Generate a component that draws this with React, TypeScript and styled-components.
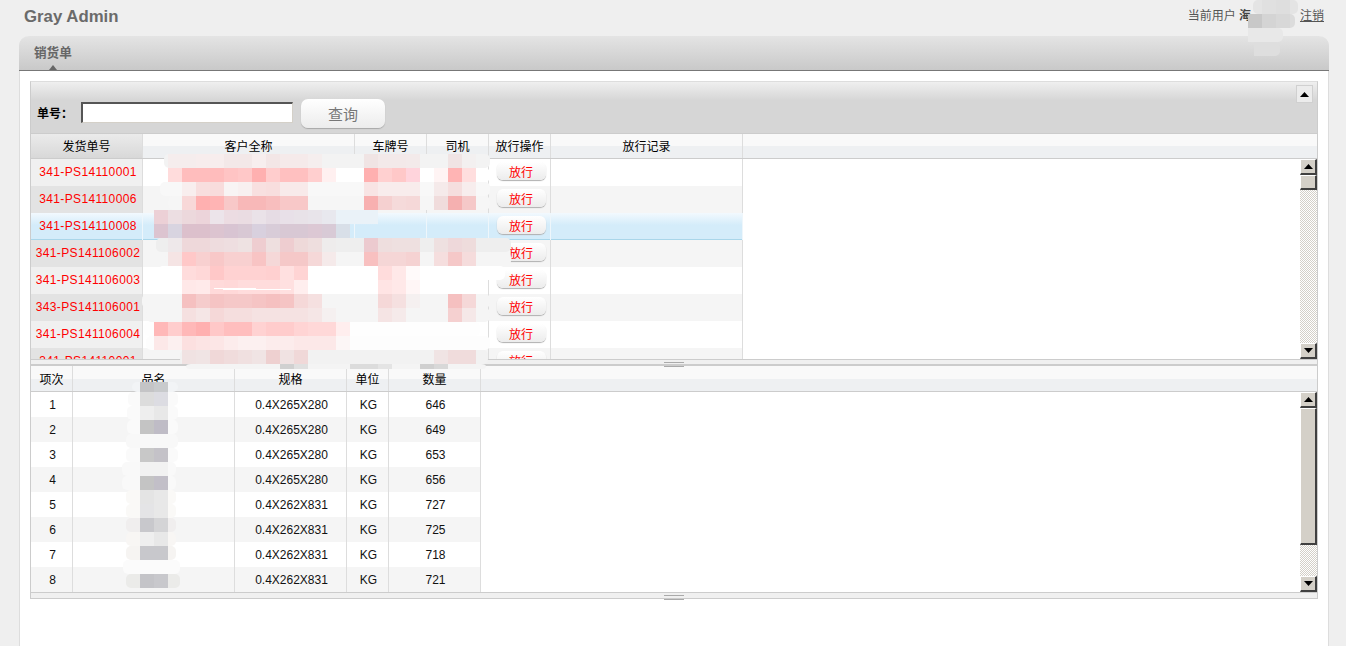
import React from 'react';
import styled, { createGlobalStyle } from 'styled-components';

const GlobalStyle = createGlobalStyle`
  html, body {
    margin: 0;
    padding: 0;
    height: 100%;
    overflow: hidden;
    background: #efefef;
    font-family: "Liberation Sans", "Noto Sans CJK SC", sans-serif;
    font-size: 12px;
    color: #111;
  }
  * { box-sizing: border-box; }
`;

const orders = [
  '341-PS14110001',
  '341-PS14110006',
  '341-PS14110008',
  '341-PS141106002',
  '341-PS141106003',
  '343-PS141106001',
  '341-PS141106004',
  '341-PS14110001',
];

const items = [
  ['1', '0.4X265X280', 'KG', '646'],
  ['2', '0.4X265X280', 'KG', '649'],
  ['3', '0.4X265X280', 'KG', '653'],
  ['4', '0.4X265X280', 'KG', '656'],
  ['5', '0.4X262X831', 'KG', '727'],
  ['6', '0.4X262X831', 'KG', '725'],
  ['7', '0.4X262X831', 'KG', '718'],
  ['8', '0.4X262X831', 'KG', '721'],
];

const orderCols = [
  { title: '发货单号', width: 112 },
  { title: '客户全称', width: 212 },
  { title: '车牌号', width: 72 },
  { title: '司机', width: 62 },
  { title: '放行操作', width: 62 },
  { title: '放行记录', width: 192 },
];

const itemCols = [
  { title: '项次', width: 42 },
  { title: '品名', width: 162 },
  { title: '规格', width: 112 },
  { title: '单位', width: 42 },
  { title: '数量', width: 92 },
];

// redaction mosaic: [y, height, bgStart, bgEnd, bg, firstCellX, cells]
type MosaicRow = [number, number, number, number, string, number, string];

const customerMosaic: MosaicRow[] = [
  [154, 14, 164, 490, 'f3f3f3', 168, 'f5eded f5eded f7eded f7eded f3e8e8 f3e8e8 f7eeee f3e6e6 f5eaea f5eaea f5eeee . . . f0e4e4 f3e9e9 f3e9e9 f3eaea . . f0e4e4 f3f0f0'],
  [168, 14, 168, 490, 'ffffff', 168, 'ffdcdc ffbdbd ffbdbd ffbcbc ffc4c4 ffc8c8 ffb0b0 ffcdcd ffc0c0 ffc0c0 ffcfcf fff0f0 . . ffb0b0 ffd0d0 ffc8c8 ffd4dc . fff4f4 ffb4b4 ffdede'],
  [182, 14, 160, 490, 'f8f8f8', 182, 'f8eeee f8dede f8dcdc f8f4f4 f8f0f0 f8e0e0 f8dede f8eaea f8eaea . . . . f8e4e4 f8ecec f8ecec f8ecec . f5eaea f5dede f7eded'],
  [196, 14, 168, 490, 'f6f6f6', 182, 'f8d8d8 ffb0b0 ffb4b4 f8c8c8 f8b8b8 f8b8b8 f8bebe f8c8c8 f8c8c8 . . . . f8b0b0 f5d0d0 f5dada f5d8d8 . f0dcdc f5b0b0 f5c8c8'],
  [210, 14, 154, 336, 'ecd0d6', 154, 'ecd0d6 ecdee2 ecd8dc ecd4da ece4ea ecdce2 eadce2 eae2e8 e6dce4 e8e0e8 e8e2e8 e8e4ea e8e8ee eaf2f8 eaf2f8 eaf2f8'],
  [224, 14, 154, 350, 'd8dfe8', 154, 'dcc4d0 d8d4e0 dcc0cc dcc0cc dcc4d0 d8c4d2 d8c8d4 d8d0de d8ccd8 d8c8d4 d8c8d4 dcc8d4 d8cad6 d8dfe8'],
  [238, 14, 156, 511, 'eeeeee', 168, 'eee8ea eed8da eed8da eedcde eedee0 eee2e2 eecdd0 eedfdf eecdd0 eed9d9 eedede eeecec . . eccacf eedede eee0e0 eee0e0 . eee0e0 eed8da eedcdc'],
  [252, 14, 165, 511, 'f5f5f5', 168, 'f5e4e4 ffc8c8 f8d0d0 f8c8c8 f8d0d0 f8d0d0 f8c4c4 f5d8d8 f5c8c8 f5c8c8 f5d8d8 f5eaea . . f8c0c0 f5d6d6 f5d6d6 f5d2d2 . f5dede f5c8c8 f5dcdc'],
  [266, 14, 158, 505, 'ffffff', 182, 'ffdcdc ffd8d8 ffc8c8 ffd2d2 ffd2d2 ffd2d2 ffd0d0 ffe0e0 ffd4d4 . . . . . ffdcdc ffe8e8 fffafa'],
  [280, 14, 158, 488, 'ffffff', 182, 'ffe8e8 ffeaea ffdada ffd8d8 ffdcdc ffdcdc ffdcdc ffe0e0 ffeeee . . . . . ffe4e4 ffe8e8 fff6f6'],
  [294, 14, 142, 490, 'f5f5f5', 182, 'f5c0c0 f5cccc f5c4c4 f5c8c8 f5c8c8 f5c4c4 f5c0c0 f5c4c4 f5d8d8 f5e0e0 . . . . f5d8d8 f5e0e0 f5f0f0 . . f5c0c0 f5d8d8'],
  [308, 14, 146, 490, 'f5f5f5', 182, 'f5e0e0 f5e6e6 f5d8d8 f5dede f5dede f5e2e2 f5e2e2 f5e2e2 f5e2e2 f5e6e6 f5f0f0 . . . f5e4e4 f5eaea . . . f5d0d0 f5e8e8'],
  [322, 14, 144, 480, 'fefefe', 154, 'ffb8b8 ffcdcd ffb8b8 ffb0b0 ffc8c8 ffbebe ffbebe ffd2d2 ffcccc ffcccc ffd4d4 ffd8d8 ffd8d8 ffeeee'],
  [336, 14, 146, 490, 'fdfdfd', 154, 'fce8e8 fcf0f0 fce0e0 fce4e4 fce6e6 fcecec fcf0f0 fcf0f0 fcecec fcecec fce8e8 fce8e8 fce8e8 fcf6f6'],
  [350, 14, 180, 488, 'f2f2f2', 182, 'f0e2e2 f0e4e4 f0d8d8 f0dcdc f0e0e0 f0e4e4 eed0d0 f0e2e2 f0d8d8 . . . . . . . . . f0e4e4 f0dcdc f0dcdc'],
  [364, 5, 186, 486, 'f4f4f4', 280, 'd0d0d0 e0e0e0 . . . dcdcdc dcdcdc e4e4e4 . . d0d0d0 d8d8d8'],
];

const productMosaic: MosaicRow[] = [
  [382, 10, 132, 178, 'f2f4f6', 140, 'c4c4c6 c8cacc'],
  [392, 14, 128, 178, 'fafafa', 140, 'dcdcdc dcdce2'],
  [406, 14, 127, 178, 'fafafa', 140, 'eeeeee e8e8e8'],
  [420, 14, 127, 178, 'fafafa', 140, 'c4c4c4 bfbcc6'],
  [434, 14, 126, 178, 'f8f8f8', 140, 'f8f8f8 f8f8f8'],
  [448, 14, 126, 178, 'fafafa', 140, 'c8c8c8 c4c2c8'],
  [462, 14, 122, 176, 'f9f9f9', 140, 'f2f2f2 f2f2f2'],
  [476, 14, 122, 176, 'f9f9f9', 140, 'c4c4c4 c2bfc8'],
  [490, 14, 126, 176, 'faf9f7', 140, 'e4e4e4 e8e8e8'],
  [504, 14, 126, 176, 'faf9f7', 140, 'e4e4e6 e8e8e8'],
  [518, 14, 126, 176, 'f0eeee', 140, 'c8c8cc d4d4d6'],
  [532, 14, 126, 176, 'f8f6f4', 140, 'efefef e8e8e8'],
  [546, 14, 126, 176, 'f6f4f2', 140, 'c8c8cc c8c8cc'],
  [560, 14, 123, 180, 'fbfbfb', 140, 'fbfbfb fbfbfb'],
  [574, 14, 126, 180, 'ebebe9', 140, 'c4c4c8 c8c8cc'],
];

const userMosaic: MosaicRow[] = [
  [0, 14, 1253, 1298, 'e4e4e4', 1262, 'e0e0e0 dedede'],
  [14, 14, 1248, 1295, 'dcdcdc', 1248, 'c8c8c8 d4d4d4 d8d8d8'],
  [28, 14, 1248, 1283, 'e8e8e8', 1248, 'e8e8e8 e8e8e8'],
  [42, 14, 1254, 1280, 'dedede', 1254, 'dedede'],
];

const Mosaic = ({ rows }: { rows: MosaicRow[] }) => (
  <>
    {rows.map(([y, h, start, end, bg, first, cells]) => (
      <g key={y}>
        <rect x={start} y={y} width={end - start} height={h} rx={5} fill={`#${bg}`} />
        {cells.split(' ').map((c, i) =>
          c === '.' ? null : <rect key={i} x={first + i * 14} y={y} width={14} height={h} fill={`#${c}`} />,
        )}
      </g>
    ))}
  </>
);

const Triangle = ({ down }: { down?: boolean }) => (
  <svg width="9" height="5" viewBox="0 0 9 5">
    <path d={down ? 'M0 0h9L4.5 5z' : 'M4.5 0L9 5H0z'} fill="#000" />
  </svg>
);

const Scrollbar = ({ thumb }: { thumb: number }) => (
  <ScrollTrack>
    <ScrollButton>
      <Triangle />
    </ScrollButton>
    <ScrollThumb $height={thumb} />
    <ScrollRest />
    <ScrollButton>
      <Triangle down />
    </ScrollButton>
  </ScrollTrack>
);

export default function App() {
  return (
    <Page>
      <GlobalStyle />
      <TopBar>
        <Brand>Gray Admin</Brand>
        <UserInfo>
          当前用户 <UserName>海</UserName>
          <Logout>注销</Logout>
        </UserInfo>
      </TopBar>
      <Main>
        <TabBar>
          <Tab>销货单</Tab>
        </TabBar>
        <Content>
          <Panel>
            <Toolbar>
              <CollapseButton>
                <Triangle />
              </CollapseButton>
              <SearchRow>
                <SearchLabel>单号：</SearchLabel>
                <SearchInput />
                <SearchButton>查询</SearchButton>
              </SearchRow>
            </Toolbar>

            <GridHeader $height={25}>
              {orderCols.map((col, i) => (
                <HeaderCell key={col.title} $width={col.width} $active={i === 0}>
                  {col.title}
                </HeaderCell>
              ))}
            </GridHeader>
            <GridBody $height={200}>
              <Rows>
                {orders.map((code, i) => (
                  <Row key={i} $height={27} $alt={i % 2 === 1} $selected={i === 2}>
                    <CodeCell $width={112} $alt={i % 2 === 1} $selected={i === 2}>
                      {code}
                    </CodeCell>
                    <Cell $width={212} />
                    <Cell $width={72} />
                    <Cell $width={62} />
                    <Cell $width={62}>
                      <ReleaseButton>放行</ReleaseButton>
                    </Cell>
                    <Cell $width={192} />
                  </Row>
                ))}
              </Rows>
              <Scrollbar thumb={15} />
            </GridBody>
            <Splitter />

            <GridHeader $height={26}>
              {itemCols.map((col) => (
                <HeaderCell key={col.title} $width={col.width}>
                  {col.title}
                </HeaderCell>
              ))}
            </GridHeader>
            <GridBody $height={200}>
              <Rows>
                {items.map(([no, spec, unit, qty], i) => (
                  <Row key={no} $height={25} $alt={i % 2 === 1}>
                    <ItemCell $width={42}>{no}</ItemCell>
                    <ItemCell $width={162} />
                    <ItemCell $width={112}>{spec}</ItemCell>
                    <ItemCell $width={42}>{unit}</ItemCell>
                    <ItemCell $width={92}>{qty}</ItemCell>
                  </Row>
                ))}
              </Rows>
              <Scrollbar thumb={137} />
            </GridBody>
            <Splitter $last />
          </Panel>
        </Content>
      </Main>
      <MosaicLayer width="1346" height="646" viewBox="0 0 1346 646">
        <Mosaic rows={customerMosaic} />
        <rect x={214} y={288} width={42} height={1} fill="#fff" />
        <rect x={223} y={289} width={68} height={1} fill="#fff" />
        <Mosaic rows={productMosaic} />
        <Mosaic rows={userMosaic} />
      </MosaicLayer>
    </Page>
  );
}

const Page = styled.div`
  position: relative;
  height: 646px;
  overflow: hidden;
  display: flex;
  flex-direction: column;
`;

const MosaicLayer = styled.svg`
  position: absolute;
  top: 0;
  left: 0;
  pointer-events: none;
`;

const TopBar = styled.div`
  height: 36px;
  flex: none;
  display: flex;
  justify-content: space-between;
  padding: 6px 22px 0 24px;
`;

const Brand = styled.div`
  margin-top: 1px;
  font-size: 16.8px;
  line-height: 20px;
  font-weight: bold;
  color: #6a6a6a;
`;

const UserInfo = styled.div`
  font-size: 12px;
  line-height: 20px;
  color: #555;
`;

const UserName = styled.b`
  color: #444;
`;

const Logout = styled.a`
  margin-left: 49px;
  text-decoration: underline;
  color: #555;
`;

const Main = styled.div`
  flex: 1;
  margin: 0 17px 0 19px;
  background: #fff;
  border-left: 1px solid #ddd;
  border-right: 1px solid #ddd;
  display: flex;
  flex-direction: column;
  border-radius: 10px 10px 0 0;
`;

const TabBar = styled.div`
  height: 35px;
  flex: none;
  margin: 0 -1px;
  background: linear-gradient(#e4e4e4, #c9c9c9);
  border-bottom: 1px solid #777;
  border-radius: 10px 10px 0 0;
  padding-left: 15px;
`;

const Tab = styled.div`
  position: relative;
  width: 38px;
  height: 34px;
  font-size: 12.6px;
  line-height: 34px;
  font-weight: bold;
  color: #666;

  &::after {
    content: '';
    position: absolute;
    left: 15px;
    bottom: 0;
    border-left: 4px solid transparent;
    border-right: 4px solid transparent;
    border-bottom: 5px solid #666;
  }
`;

const Content = styled.div`
  padding: 10px 10px 0;
`;

const Panel = styled.div`
  width: 1288px;
  border: 1px solid #ccc;
  border-top-color: #ddd;
`;

const Toolbar = styled.div`
  position: relative;
  height: 52px;
  background: linear-gradient(#efefef, #d6d6d6 36%, #d6d6d6);
  border-bottom: 1px solid #ccc;
`;

const CollapseButton = styled.div`
  position: absolute;
  top: 3px;
  right: 4px;
  width: 17px;
  height: 18px;
  background: #ececec;
  border: 1px solid #d0d0d0;
  display: flex;
  align-items: center;
  justify-content: center;
`;

const SearchRow = styled.div`
  display: flex;
  align-items: center;
  height: 100%;
  padding: 15px 0 4px 6px;
`;

const SearchLabel = styled.span`
  width: 44px;
  font-size: 12px;
  font-weight: bold;
  color: #000;
  margin-bottom: 1px;
`;

const SearchInput = styled.input`
  width: 212px;
  height: 21px;
  margin-bottom: 2px;
  background: #fff;
  border-style: solid;
  border-width: 2px 1px 1px 2px;
  border-color: #555 #d4d0c8 #d4d0c8 #555;
  padding: 0;
  outline: none;
`;

const SearchButton = styled.button`
  width: 84px;
  height: 29px;
  margin-left: 8px;
  border: 0;
  border-radius: 7px;
  background: linear-gradient(#ffffff, #ececec);
  box-shadow: 0 1px 1px #a8a8a8;
  font: 15px "Liberation Sans", "Noto Sans CJK SC", sans-serif;
  color: #777;
`;

const GridHeader = styled.div<{ $height: number }>`
  height: ${(p) => p.$height}px;
  display: flex;
  background: linear-gradient(#f9f9f9 50%, #eef0f2 50%);
  border-bottom: 1px solid #ccc;
`;

const HeaderCell = styled.div<{ $width: number; $active?: boolean }>`
  width: ${(p) => p.$width}px;
  flex: none;
  display: flex;
  align-items: center;
  justify-content: center;
  padding-bottom: 1px;
  border-right: 1px solid #ddd;
  font-size: 12px;
  color: #000;
  ${(p) => p.$active && 'background: linear-gradient(#ebebeb, #d8d8d8);'}
`;

const GridBody = styled.div<{ $height: number }>`
  position: relative;
  height: ${(p) => p.$height}px;
  display: flex;
  overflow: hidden;
`;

const Rows = styled.div`
  flex: 1;
  min-width: 0;
`;

const Row = styled.div<{ $height: number; $alt?: boolean; $selected?: boolean }>`
  width: fit-content;
  height: ${(p) => p.$height}px;
  display: flex;
  background: ${(p) =>
    p.$selected ? 'linear-gradient(#f2f9fe, #d4ecfa 45%, #d4ecfa)' : p.$alt ? '#f5f5f5' : '#fff'};
  ${(p) => p.$selected && 'box-shadow: inset 0 -1px 0 #a9d6ea; > div { border-right-color: #eef6fb; }'}
`;

const Cell = styled.div<{ $width: number }>`
  width: ${(p) => p.$width}px;
  flex: none;
  display: flex;
  align-items: center;
  justify-content: center;
  border-right: 1px solid #ddd;
  font-size: 12px;
  color: #111;
`;

const ItemCell = styled(Cell)`
  padding-left: 2px;
`;

const CodeCell = styled(Cell)<{ $alt?: boolean; $selected?: boolean }>`
  color: #f00;
  letter-spacing: 0.35px;
  white-space: nowrap;
  padding: 0 0 2px 3px;
  background: ${(p) => (p.$selected ? 'transparent' : p.$alt ? '#e3e3e3' : '#f0f0f0')};
`;

const ReleaseButton = styled.button`
  width: 49px;
  height: 18px;
  margin: -3px 0 0 3px;
  padding: 0;
  border: 0;
  border-radius: 6px;
  background: linear-gradient(#ffffff, #ececec);
  box-shadow: 0 1px 1px #b0b0b0;
  font: 12px "Liberation Sans", "Noto Sans CJK SC", sans-serif;
  color: #f00;
`;

const ScrollTrack = styled.div`
  width: 17px;
  flex: none;
  display: flex;
  flex-direction: column;
  background: repeating-conic-gradient(#d4d0c8 0 25%, #ffffff 0 50%) 0 0 / 2px 2px;
`;

const ScrollButton = styled.div`
  height: 16px;
  flex: none;
  background: #d4d0c8;
  border-style: solid;
  border-width: 1px 2px 2px 1px;
  border-color: #fff #404040 #404040 #fff;
  display: flex;
  align-items: center;
  justify-content: center;
`;

const ScrollThumb = styled(ScrollButton)<{ $height: number }>`
  height: ${(p) => p.$height}px;
`;

const ScrollRest = styled.div`
  flex: 1;
`;

const Splitter = styled.div<{ $last?: boolean }>`
  position: relative;
  height: ${(p) => (p.$last ? 6 : 7)}px;
  background: #f0f0f0;
  border-top: 1px solid #ccc;
  border-bottom: ${(p) => (p.$last ? 'none' : '2px solid #ccc')};

  &::after {
    content: '';
    position: absolute;
    left: 633px;
    top: 2px;
    width: 20px;
    height: 3px;
    border-top: 1px solid #aaa;
    border-bottom: 1px solid #aaa;
  }
`;
